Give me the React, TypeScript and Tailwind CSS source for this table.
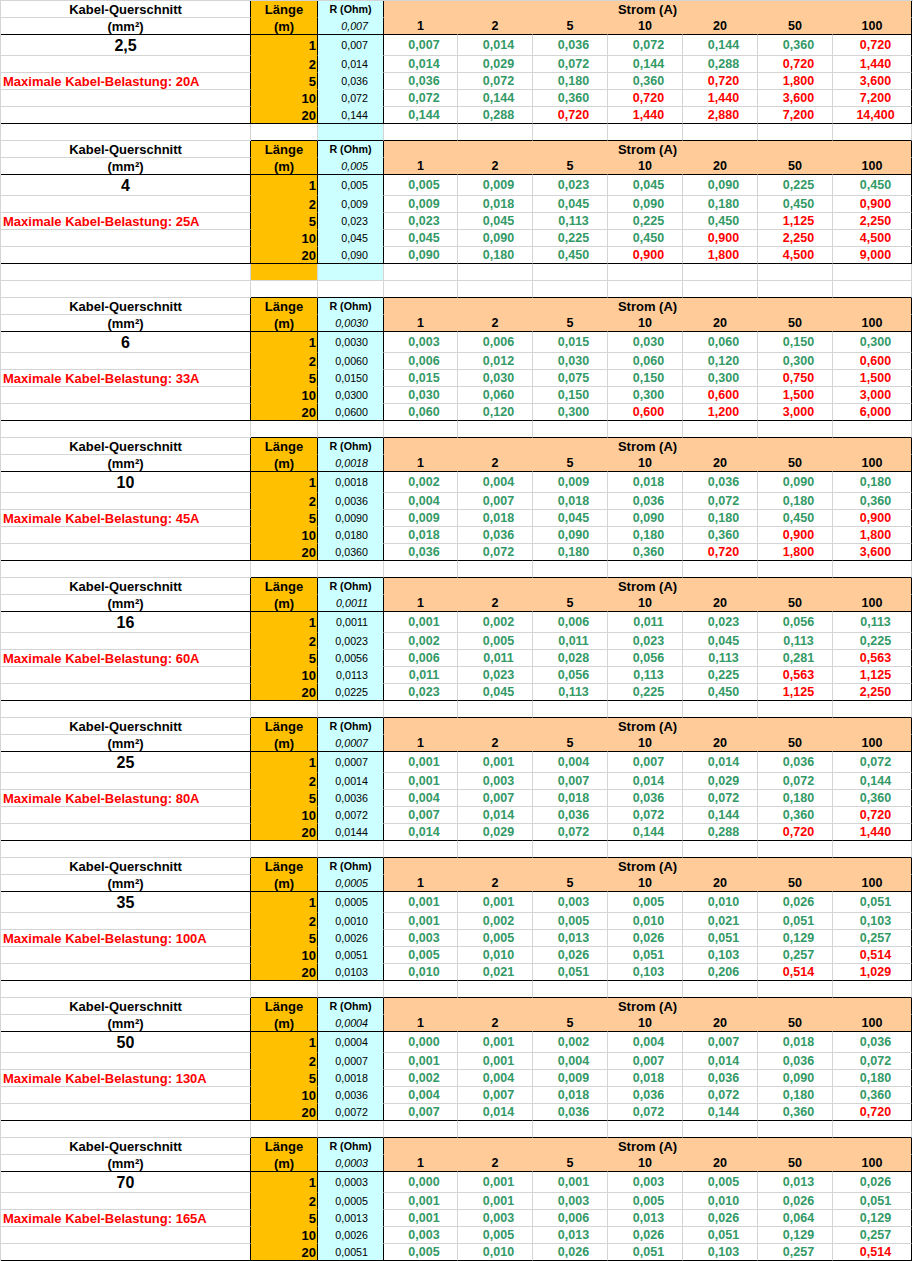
import { Fragment, type ReactNode } from "react";
import clsx from "clsx";

type Block = { mm: string; amp: string; rh: string; r: string[]; v: string[] };

const BLOCKS: Block[] = [
  {
    mm: "2,5", amp: "20A", rh: "0,007",
    r: ["0,007", "0,014", "0,036", "0,072", "0,144"],
    v: [
      "0,007 0,014 0,036 0,072 0,144 0,360 0,720",
      "0,014 0,029 0,072 0,144 0,288 0,720 1,440",
      "0,036 0,072 0,180 0,360 0,720 1,800 3,600",
      "0,072 0,144 0,360 0,720 1,440 3,600 7,200",
      "0,144 0,288 0,720 1,440 2,880 7,200 14,400",
    ],
  },
  {
    mm: "4", amp: "25A", rh: "0,005",
    r: ["0,005", "0,009", "0,023", "0,045", "0,090"],
    v: [
      "0,005 0,009 0,023 0,045 0,090 0,225 0,450",
      "0,009 0,018 0,045 0,090 0,180 0,450 0,900",
      "0,023 0,045 0,113 0,225 0,450 1,125 2,250",
      "0,045 0,090 0,225 0,450 0,900 2,250 4,500",
      "0,090 0,180 0,450 0,900 1,800 4,500 9,000",
    ],
  },
  {
    mm: "6", amp: "33A", rh: "0,0030",
    r: ["0,0030", "0,0060", "0,0150", "0,0300", "0,0600"],
    v: [
      "0,003 0,006 0,015 0,030 0,060 0,150 0,300",
      "0,006 0,012 0,030 0,060 0,120 0,300 0,600",
      "0,015 0,030 0,075 0,150 0,300 0,750 1,500",
      "0,030 0,060 0,150 0,300 0,600 1,500 3,000",
      "0,060 0,120 0,300 0,600 1,200 3,000 6,000",
    ],
  },
  {
    mm: "10", amp: "45A", rh: "0,0018",
    r: ["0,0018", "0,0036", "0,0090", "0,0180", "0,0360"],
    v: [
      "0,002 0,004 0,009 0,018 0,036 0,090 0,180",
      "0,004 0,007 0,018 0,036 0,072 0,180 0,360",
      "0,009 0,018 0,045 0,090 0,180 0,450 0,900",
      "0,018 0,036 0,090 0,180 0,360 0,900 1,800",
      "0,036 0,072 0,180 0,360 0,720 1,800 3,600",
    ],
  },
  {
    mm: "16", amp: "60A", rh: "0,0011",
    r: ["0,0011", "0,0023", "0,0056", "0,0113", "0,0225"],
    v: [
      "0,001 0,002 0,006 0,011 0,023 0,056 0,113",
      "0,002 0,005 0,011 0,023 0,045 0,113 0,225",
      "0,006 0,011 0,028 0,056 0,113 0,281 0,563",
      "0,011 0,023 0,056 0,113 0,225 0,563 1,125",
      "0,023 0,045 0,113 0,225 0,450 1,125 2,250",
    ],
  },
  {
    mm: "25", amp: "80A", rh: "0,0007",
    r: ["0,0007", "0,0014", "0,0036", "0,0072", "0,0144"],
    v: [
      "0,001 0,001 0,004 0,007 0,014 0,036 0,072",
      "0,001 0,003 0,007 0,014 0,029 0,072 0,144",
      "0,004 0,007 0,018 0,036 0,072 0,180 0,360",
      "0,007 0,014 0,036 0,072 0,144 0,360 0,720",
      "0,014 0,029 0,072 0,144 0,288 0,720 1,440",
    ],
  },
  {
    mm: "35", amp: "100A", rh: "0,0005",
    r: ["0,0005", "0,0010", "0,0026", "0,0051", "0,0103"],
    v: [
      "0,001 0,001 0,003 0,005 0,010 0,026 0,051",
      "0,001 0,002 0,005 0,010 0,021 0,051 0,103",
      "0,003 0,005 0,013 0,026 0,051 0,129 0,257",
      "0,005 0,010 0,026 0,051 0,103 0,257 0,514",
      "0,010 0,021 0,051 0,103 0,206 0,514 1,029",
    ],
  },
  {
    mm: "50", amp: "130A", rh: "0,0004",
    r: ["0,0004", "0,0007", "0,0018", "0,0036", "0,0072"],
    v: [
      "0,000 0,001 0,002 0,004 0,007 0,018 0,036",
      "0,001 0,001 0,004 0,007 0,014 0,036 0,072",
      "0,002 0,004 0,009 0,018 0,036 0,090 0,180",
      "0,004 0,007 0,018 0,036 0,072 0,180 0,360",
      "0,007 0,014 0,036 0,072 0,144 0,360 0,720",
    ],
  },
  {
    mm: "70", amp: "165A", rh: "0,0003",
    r: ["0,0003", "0,0005", "0,0013", "0,0026", "0,0051"],
    v: [
      "0,000 0,001 0,001 0,003 0,005 0,013 0,026",
      "0,001 0,001 0,003 0,005 0,010 0,026 0,051",
      "0,001 0,003 0,006 0,013 0,026 0,064 0,129",
      "0,003 0,005 0,013 0,026 0,051 0,129 0,257",
      "0,005 0,010 0,026 0,051 0,103 0,257 0,514",
    ],
  },
];

const LENGTHS = ["1", "2", "5", "10", "20"];
const CURRENTS = ["1", "2", "5", "10", "20", "50", "100"];
// strom column widths incl. right gridline
const SW = ["w-[74px]", "w-[75px]", "w-[75px]", "w-[75px]", "w-[75px]", "w-[75px]", "w-[79px]"];

interface CellProps {
  w: string;
  bg?: string;
  className?: string;
  children?: ReactNode;
}

function Cell({ w, bg = "bg-white", className, children }: CellProps) {
  return (
    <div className={clsx("flex h-full shrink-0 items-center border-r border-b whitespace-nowrap", w, bg, className)}>
      {children}
    </div>
  );
}

function Section({ d }: { d: Block }) {
  return (
    <>
      {/* header row 1 */}
      <div className="flex h-[17px]">
        <Cell w="w-[250px]" className="justify-center border-r-black border-b-[#d4d4d4] text-[13px] font-bold">
          Kabel-Querschnitt
        </Cell>
        <Cell w="w-[67px]" bg="bg-[#ffc000]" className="justify-center border-r-black border-b-[#ffc000] text-[13px] font-bold">
          Länge
        </Cell>
        <Cell w="w-[66px]" bg="bg-[#ccffff]" className="justify-center border-r-black border-b-[#ccffff] text-[10.7px] font-bold">
          R (Ohm)
        </Cell>
        <Cell w="w-[528px]" bg="bg-[#ffcc99]" className="justify-center border-r-black border-b-[#ffcc99] text-[13px] font-bold">
          Strom (A)
        </Cell>
      </div>
      {/* header row 2 */}
      <div className="flex h-[17px]">
        <Cell w="w-[250px]" className="justify-center border-r-black border-b-black text-[13px] font-bold">
          (mm²)
        </Cell>
        <Cell w="w-[67px]" bg="bg-[#ffc000]" className="justify-center border-r-black border-b-black text-[13px] font-bold">
          (m)
        </Cell>
        <Cell w="w-[66px]" bg="bg-[#ccffff]" className="justify-end pr-[15px] border-r-black border-b-black text-[10.7px] italic">
          {d.rh}
        </Cell>
        {CURRENTS.map((c, i) => (
          <Cell
            key={c}
            w={SW[i]}
            bg="bg-[#ffcc99]"
            className={clsx(
              "justify-center border-b-black text-[12.5px] font-bold",
              i === 6 ? "border-r-black" : "border-r-[#ffcc99]"
            )}
          >
            {c}
          </Cell>
        ))}
      </div>
      {/* data rows */}
      {LENGTHS.map((len, ri) => {
        const last = ri === 4;
        return (
          <div key={len} className={ri === 0 ? "flex h-[21px]" : "flex h-[17px]"}>
            <Cell
              w="w-[250px]"
              className={clsx(
                "border-r-black",
                last ? "border-b-black" : "border-b-[#d4d4d4]",
                ri === 0 && "justify-center text-[16px] font-bold",
                ri === 2 && "pl-[2px] text-[13px] font-bold text-[#ff0000]"
              )}
            >
              {ri === 0 && d.mm}
              {ri === 2 && `Maximale Kabel-Belastung: ${d.amp}`}
            </Cell>
            <Cell
              w="w-[67px]"
              bg="bg-[#ffc000]"
              className={clsx(
                "justify-end pr-[1px] border-r-black text-[13px] font-bold",
                last ? "border-b-black" : "border-b-[#ffc000]"
              )}
            >
              {len}
            </Cell>
            <Cell
              w="w-[66px]"
              bg="bg-[#ccffff]"
              className={clsx(
                "justify-end pr-[15px] border-r-black text-[10.7px]",
                last ? "border-b-black" : "border-b-[#ccffff]"
              )}
            >
              {d.r[ri]}
            </Cell>
            {d.v[ri].split(" ").map((val, ci) => (
              <Cell
                key={ci}
                w={SW[ci]}
                className={clsx(
                  "justify-center pl-[7px] text-[12.5px] font-bold",
                  ci === 6 ? "border-r-black" : "border-r-[#d4d4d4]",
                  last ? "border-b-black" : "border-b-[#d4d4d4]",
                  parseFloat(val.replace(",", ".")) > 0.5 ? "text-[#ff0000]" : "text-[#339966]"
                )}
              >
                {val}
              </Cell>
            ))}
          </div>
        );
      })}
    </>
  );
}

function BlankRow({ orange, cyan, next }: { orange?: boolean; cyan?: boolean; next?: boolean }) {
  const b = next ? "border-b-black" : "border-b-[#d4d4d4]";
  return (
    <div className="flex h-[17px]">
      <Cell w="w-[250px]" className="border-r-[#d4d4d4] border-b-[#d4d4d4]" />
      <Cell w="w-[67px]" bg={orange ? "bg-[#ffc000]" : "bg-white"} className={clsx("border-r-[#d4d4d4]", b)} />
      <Cell w="w-[66px]" bg={cyan ? "bg-[#ccffff]" : "bg-white"} className={clsx("border-r-[#d4d4d4]", b)} />
      {SW.map((w, i) => (
        <Cell key={i} w={w} className={clsx("border-r-[#d4d4d4]", b)} />
      ))}
    </div>
  );
}

export default function App() {
  return (
    <div className="min-h-screen bg-white">
      <div className="w-[913px] border-t border-l border-[#d4d4d4] font-['Liberation_Sans',Arial,sans-serif] leading-[15px] text-black">
        {BLOCKS.map((d, i) => (
          <Fragment key={d.mm}>
            <Section d={d} />
            {i === 0 && <BlankRow cyan next />}
            {i === 1 && (
              <>
                <BlankRow orange cyan />
                <BlankRow next />
              </>
            )}
            {i > 1 && i < 8 && <BlankRow next />}
          </Fragment>
        ))}
      </div>
    </div>
  );
}
